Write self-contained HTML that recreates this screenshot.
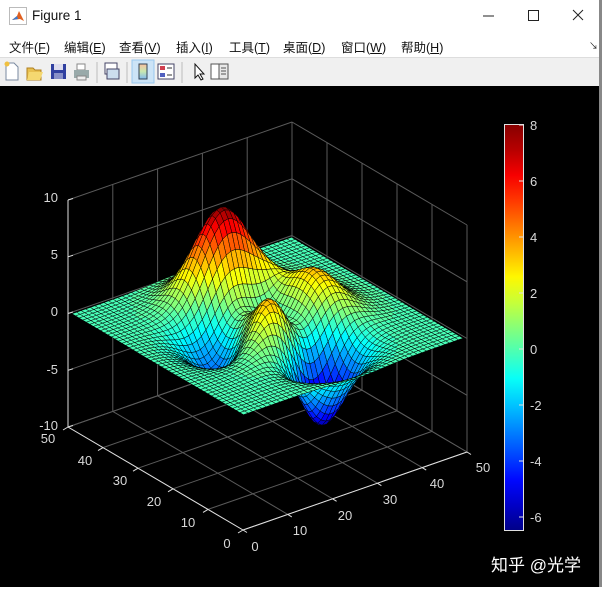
<!DOCTYPE html>
<html><head><meta charset="utf-8"><style>
html,body{margin:0;padding:0;width:602px;height:587px;overflow:hidden;background:#fff;font-family:"Liberation Sans","Noto Sans CJK SC",sans-serif}
#title{position:absolute;left:0;top:0;width:602px;height:32px;background:#fff}
#menu{position:absolute;left:0;top:32px;width:602px;height:25px;background:#fff;font-size:12.5px;color:#111}
#menu span{position:absolute;top:5px}
#tb{position:absolute;left:0;top:57px;width:602px;height:29px;background:#f0f0f0;border-top:1px solid #ddd}
#plot{position:absolute;left:0;top:86px;width:602px;height:501px;background:#000}
svg text{font-family:"Liberation Sans",sans-serif}
</style></head><body>
<div id="title">
<svg width="20" height="20" style="position:absolute;left:9px;top:7px" viewBox="0 0 20 20"><rect x="0.5" y="0.5" width="17" height="17" fill="#fff" stroke="#bbb"/><path d="M3 13 L8 9 L10 4 L15 14 L11 12 Z" fill="#e06020"/><path d="M3 13 L8 9 L9 12Z" fill="#3a7ad0"/></svg>
<span style="position:absolute;left:32px;top:8px;font-size:13.5px;color:#111">Figure 1</span>
<svg width="120" height="20" style="position:absolute;left:478px;top:6px"><line x1="5" y1="10" x2="16" y2="10" stroke="#222"/><rect x="50.5" y="4.5" width="10" height="10" fill="none" stroke="#222"/><path d="M95 4 L105 14 M105 4 L95 14" stroke="#222"/></svg>
</div>
<div id="menu">
<span style="left:9px">文件(<u>F</u>)</span>
<span style="left:64px">编辑(<u>E</u>)</span>
<span style="left:119px">查看(<u>V</u>)</span>
<span style="left:176px">插入(<u>I</u>)</span>
<span style="left:229px">工具(<u>T</u>)</span>
<span style="left:283px">桌面(<u>D</u>)</span>
<span style="left:341px">窗口(<u>W</u>)</span>
<span style="left:401px">帮助(<u>H</u>)</span>
<span style="left:589px;font-size:9px;top:7px">↘</span>
</div>
<div id="tb">
<svg width="240" height="28">
<path d="M6 5 H14 L18 9 V22 H6Z" fill="#fff" stroke="#7a8aa0"/><circle cx="7" cy="6" r="2.5" fill="#f0c040"/>
<path d="M27 10 H33 L35 12 H41 V22 H27Z" fill="#e8c050" stroke="#b08020"/><path d="M29 14 H43 L40 22 H27Z" fill="#f5d870"/>
<rect x="51" y="6" width="15" height="15" fill="#3040a0"/><rect x="54" y="6" width="9" height="6" fill="#dde"/><rect x="54" y="15" width="9" height="6" fill="#8890c8"/>
<path d="M77 6 H85 V12 H77Z" fill="#fff" stroke="#888"/><rect x="74" y="12" width="15" height="8" fill="#9aa" /><rect x="77" y="18" width="9" height="4" fill="#eee" stroke="#888"/>
<line x1="97" y1="4" x2="97" y2="25" stroke="#bbb"/>
<rect x="105" y="5" width="12" height="11" fill="#fff" stroke="#446"/><rect x="107" y="11" width="12" height="10" fill="#cde" stroke="#446"/>
<line x1="127" y1="4" x2="127" y2="25" stroke="#bbb"/>
<rect x="132" y="2" width="22" height="23" fill="#cce4f7" stroke="#99c9ef"/>
<defs><linearGradient id="tg" x1="0" y1="0" x2="0" y2="1"><stop offset="0" stop-color="#f8c0a0"/><stop offset=".5" stop-color="#c8e8b0"/><stop offset="1" stop-color="#80b8f0"/></linearGradient></defs>
<rect x="139" y="6" width="8" height="15" fill="url(#tg)" stroke="#345"/>
<rect x="158" y="6" width="16" height="15" fill="#fff" stroke="#446"/><rect x="160" y="8" width="5" height="4" fill="#d04050"/><rect x="160" y="15" width="5" height="4" fill="#5060c0"/><path d="M167 10H172M167 17H172" stroke="#333"/>
<line x1="182" y1="4" x2="182" y2="25" stroke="#bbb"/>
<path d="M195 6 V20 L198 17 L201 22 L203 21 L200 16 L204 16Z" fill="#fff" stroke="#111"/>
<rect x="211" y="6" width="17" height="15" fill="#fff" stroke="#555"/><rect x="219" y="6" width="9" height="15" fill="#e8e8e8" stroke="#555"/><path d="M221 10H226M221 13H226M221 16H226" stroke="#555"/>
</svg>
</div>
<div id="plot"><svg id="s" width="602" height="501" viewBox="0 86 602 501"></svg></div>
<div style="position:absolute;left:599px;top:0;width:3px;height:587px;background:#888"></div>
<script>
(function(){
var s=document.getElementById('s'),h=[];
function P(x,y,z){return [243+x*224/50-y*175/50, 530-x*78/50-y*103/50-(z+10)*227/20];}
function L(a,b,c){h.push('<line x1="'+a[0].toFixed(1)+'" y1="'+a[1].toFixed(1)+'" x2="'+b[0].toFixed(1)+'" y2="'+b[1].toFixed(1)+'" stroke="'+c+'" stroke-width="1"/>');}
var g='#5a5a5a';
for(var v=0;v<=50;v+=10){L(P(v,0,-10),P(v,50,-10),g);L(P(0,v,-10),P(50,v,-10),g);L(P(v,50,-10),P(v,50,10),g);L(P(50,v,-10),P(50,v,10),g);}
for(var z=-10;z<=10;z+=5){L(P(0,50,z),P(50,50,z),g);L(P(50,0,z),P(50,50,z),g);}
function T(x,y,t,a){h.push('<text x="'+x+'" y="'+y+'" fill="#d8d8d8" font-size="13" text-anchor="'+(a||'start')+'">'+t+'</text>');}
var n=49,Z=[],zmin=1e9,zmax=-1e9;
for(var i=0;i<n;i++){Z[i]=[];var y=-3+6*i/48;for(var j=0;j<n;j++){var x=-3+6*j/48;
var zz=3*(1-x)*(1-x)*Math.exp(-x*x-(y+1)*(y+1))-10*(x/5-x*x*x-Math.pow(y,5))*Math.exp(-x*x-y*y)-1/3*Math.exp(-(x+1)*(x+1)-y*y);
Z[i][j]=zz;if(zz<zmin)zmin=zz;if(zz>zmax)zmax=zz;}}
function jet(t){var k=Math.min(63,Math.floor(t*64));t=(k+0.5)/64;function c(v){return Math.round(255*Math.max(0,Math.min(1,v)));}
return 'rgb('+c(1.5-Math.abs(4*t-3))+','+c(1.5-Math.abs(4*t-2))+','+c(1.5-Math.abs(4*t-1))+')';}
function C(k){return 0.5+k*49/48;}
var F=[];
for(var i=0;i<n-1;i++)for(var j=0;j<n-1;j++){
var zc=(Z[i][j]+Z[i+1][j]+Z[i][j+1]+Z[i+1][j+1])/4;
var d=-0.527*C(j+0.5)/50-0.687*C(i+0.5)/50+0.5*(zc+10)/20;
F.push([d,i,j]);}
F.sort(function(a,b){return a[0]-b[0];});
F.forEach(function(f){var i=f[1],j=f[2];
var p=[P(C(j),C(i),Z[i][j]),P(C(j+1),C(i),Z[i][j+1]),P(C(j+1),C(i+1),Z[i+1][j+1]),P(C(j),C(i+1),Z[i+1][j])];
h.push('<polygon points="'+p.map(function(q){return q[0].toFixed(1)+','+q[1].toFixed(1);}).join(' ')+'" fill="'+jet((Z[i][j]-zmin)/(zmax-zmin))+'" stroke="#000" stroke-width="0.5"/>');});
var w='#e0e0e0';
L(P(0,50,-10),P(0,50,10),w);L(P(0,0,-10),P(50,0,-10),w);L(P(0,0,-10),P(0,50,-10),w);
for(var v=0;v<=50;v+=10){var a=P(v,0,-10);L(a,[a[0]+4,a[1]+2.5],w);var b=P(0,v,-10);L(b,[b[0]-5,b[1]+3],w);}
for(var z=-10;z<=10;z+=5){var a=P(0,50,z);L(a,[a[0]+5,a[1]-1.5],w);}
var xl=[[255,551],[300,535],[345,520],[390,504],[437,488],[483,472]];
for(var k=0;k<6;k++)T(xl[k][0],xl[k][1],k*10,'middle');
var yl=[[227,548],[188,527],[154,506],[120,485],[85,465],[48,443]];
for(var k=0;k<6;k++)T(yl[k][0],yl[k][1],k*10,'middle');
var zl=[[58,430,'-10'],[58,374,'-5'],[58,316,'0'],[58,259,'5'],[58,202,'10']];
zl.forEach(function(q){T(q[0],q[1],q[2],'end');});
h.push('<defs><linearGradient id="cb" x1="0" y1="1" x2="0" y2="0">');
for(var k=0;k<=16;k++){h.push('<stop offset="'+(k/16)+'" stop-color="'+jet(Math.min(0.999,k/16))+'"/>');}
h.push('</linearGradient></defs><rect x="504.5" y="124.5" width="19" height="406" fill="url(#cb)" stroke="#e0e0e0"/>');
for(var t=-6;t<=8;t+=2){var yy=349-t*28;L([519,yy],[524,yy],w);T(530,yy+5,t);}
h.push('<text x="491" y="571" fill="#fff" font-size="17" style="font-family:\'Liberation Sans\',\'Noto Sans CJK SC\',sans-serif">知乎 @光学</text>');
s.innerHTML=h.join('');
})();
</script>
</body></html>
